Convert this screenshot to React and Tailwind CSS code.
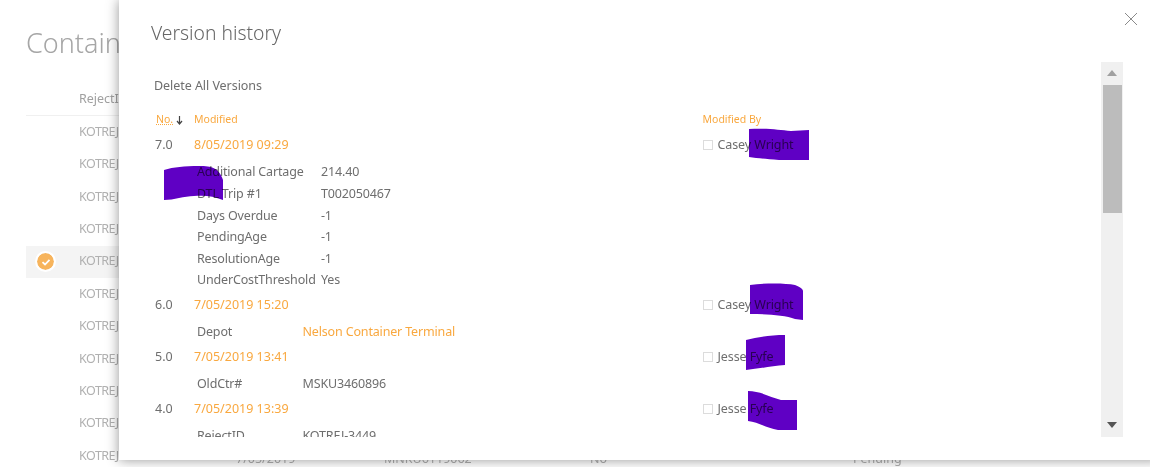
const font = { fontFamily: '"Noto Sans", sans-serif' };

function Blob({ className, d, w, h }) {
  return (
    <svg className={`absolute mix-blend-multiply ${className}`} width={w} height={h} viewBox={`0 0 ${w} ${h}`}>
      <path d={d} fill="#5f00c4" />
    </svg>
  );
}

function Change({ label, value, orange, w }) {
  return (
    <div className="flex h-[21.6px] items-center tracking-[-0.16px]">
      <div className={`shrink-0 whitespace-nowrap ${w ? "w-[105.5px]" : "w-[124px]"}`}>{label}</div>
      <div className={orange ? "text-[#f9a83f]" : ""}>{value}</div>
    </div>
  );
}

function Version({ no, date, by, children }) {
  return (
    <div className="pb-[2.4px]">
      <div className="flex h-[22px] items-center">
        <div className="w-[39px]">{no}</div>
        <div className="w-[508.5px] text-[#f9a83f]">{date}</div>
        <div className="flex items-center">
          <div className="mr-[5px] h-[10px] w-[10px] border border-[#dcdcdc]" />
          <span className="tracking-[-0.1px]">{by}</span>
        </div>
      </div>
      <div className="pl-[42px] pt-[6px]">{children}</div>
    </div>
  );
}

export default function App() {
  const rows = [0, 1, 2, 3, 4, 5, 6, 7, 8, 9, 10];
  return (
    <div className="relative h-[467px] w-[1150px] overflow-hidden bg-white text-[12.5px] text-[#6e6e6e]" style={font}>
      <div className="pl-[26px] pt-[23px]">
        <div className="text-[27px] font-light leading-[40px] text-[#a6a6a6]">Container</div>
        <div className="mt-[20px] h-[33px] border-b border-[#f0f0f0] pl-[53px] leading-[32px] text-[#a0a0a0]">RejectID</div>
        <div className="text-[#b0b0b0]">
          {rows.map((r) => (
            <div key={r} className={`flex h-[32.4px] items-center pl-[53px] ${r === 4 ? "relative bg-[#f4f4f4]" : ""}`}>
              {r === 4 && (
                <div className="absolute left-[11px] top-[7.5px] flex h-[17px] w-[17px] items-center justify-center rounded-full bg-[#f7b45c] outline-2 outline-white">
                  <svg width="10" height="10" viewBox="0 0 10 10"><path d="M1.5 5.2 4 7.5 8.5 2.8" fill="none" stroke="#fff" strokeWidth="1.8" /></svg>
                </div>
              )}
              <span className="w-[157px] tracking-[-0.5px]">KOTREJ-3450</span>
              <span className="w-[148px] translate-y-[3px]">7/05/2019</span>
              <span className="w-[206px] translate-y-[3px]">MNKU6119062</span>
              <span className="w-[263px] translate-y-[3px]">No</span>
              <span className="translate-y-[3px]">Pending</span>
            </div>
          ))}
        </div>
      </div>

      <div className="absolute left-[119px] top-0 h-[460px] w-[1040px] bg-white shadow-[0_0_12px_rgba(0,0,0,0.42)]">
        <div className="absolute left-[32px] top-[18px] text-[19.3px] font-light leading-[30px] text-[#666]">Version history</div>
        <svg className="absolute left-[1005px] top-[12px]" width="14" height="14" viewBox="0 0 14 14">
          <path d="M1 1 13 13M13 1 1 13" stroke="#8a8a8a" strokeWidth="1" fill="none" />
        </svg>

        <div className="absolute left-[36px] top-[63px] h-[374px] w-[945px] overflow-hidden">
          <div className="-ml-px mt-[14px] h-[18px] leading-[18px] tracking-[-0.05px]">Delete All Versions</div>
          <div className="mt-[16px] flex h-[18px] items-center text-[10.5px] text-[#f9a83f]">
            <div className="flex w-[39px] items-center pl-px">
              <span className="underline decoration-dotted">No.</span>
              <svg className="ml-[3px]" width="7" height="9" viewBox="0 0 7 9"><path d="M3.5 0V7M1 5l2.5 3L6 5" fill="none" stroke="#444" strokeWidth="1.2" /></svg>
            </div>
            <div className="w-[508.5px]">Modified</div>
            <div>Modified By</div>
          </div>
          <div className="pt-[5px]">
            <Version no="7.0" date="8/05/2019 09:29" by="Casey Wright">
              <Change label="Additional Cartage" value="214.40" />
              <Change label="DTL Trip #1" value="T002050467" />
              <Change label="Days Overdue" value="-1" />
              <Change label="PendingAge" value="-1" />
              <Change label="ResolutionAge" value="-1" />
              <Change label="UnderCostThreshold" value="Yes" />
            </Version>
            <Version no="6.0" date="7/05/2019 15:20" by="Casey Wright">
              <Change w label="Depot" value="Nelson Container Terminal" orange />
            </Version>
            <Version no="5.0" date="7/05/2019 13:41" by="Jesse Fyfe">
              <Change w label="OldCtr#" value="MSKU3460896" />
            </Version>
            <Version no="4.0" date="7/05/2019 13:39" by="Jesse Fyfe">
              <Change w label="RejectID" value="KOTREJ-3449" />
            </Version>
          </div>
        </div>

        <div className="absolute left-[982px] top-[62px] flex h-[375px] w-[22px] flex-col items-center bg-[#f0f0f0]">
          <svg className="mt-[8px]" width="10" height="6" viewBox="0 0 10 6"><path d="M5 0 10 6H0Z" fill="#a0a0a0" /></svg>
          <div className="mt-[9px] h-[128px] w-[19px] bg-[#bcbcbc]" />
          <svg className="mt-auto mb-[9px]" width="10" height="6" viewBox="0 0 10 6"><path d="M0 0H10L5 6Z" fill="#555" /></svg>
        </div>
      </div>

      <Blob className="left-[164px] top-[166px]" w={60} h={35} d="M0 4C10 1 20 0 35 0C48 0 55 2 59 14V34C50 30 40 29 30 30C20 30 10 34 0 34Z" />
      <Blob className="left-[749px] top-[128px]" w={60} h={33} d="M0 1C20 0 30 2 42 3L60 2V32L30 32C15 31 8 30 0 29Z" />
      <Blob className="left-[750px] top-[283px]" w={54} h={37} d="M0 2C15 0 35 0 45 2C50 4 53 6 53 8V37L45 36C35 32 15 31 0 31Z" />
      <Blob className="left-[746px] top-[335px]" w={40} h={35} d="M0 5C12 2 25 0 39 0V30C25 31 12 34 0 35Z" />
      <Blob className="left-[748px] top-[391px]" w={50} h={40} d="M0 0C12 0 22 6 33 9H49V39H30C18 37 10 31 0 30Z" />
    </div>
  );
}
